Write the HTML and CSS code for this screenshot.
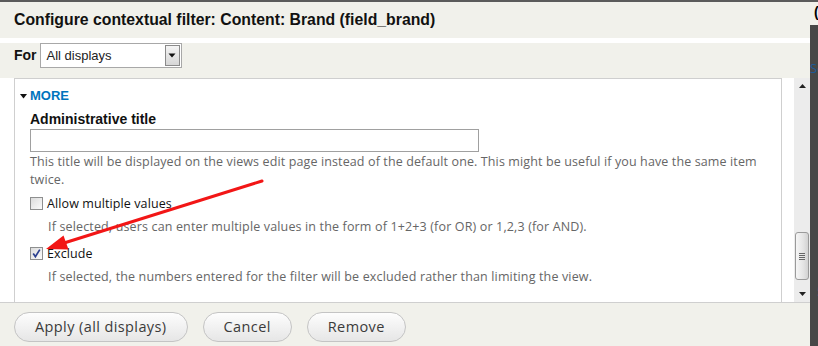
FILE: index.html
```html
<!DOCTYPE html>
<html>
<head>
<meta charset="utf-8">
<title>Configure contextual filter</title>
<link rel="stylesheet" href="styles.css">
</head>
<body>
<div class="screen">
  <div class="dialog">
    <div class="title">Configure contextual filter: Content: Brand (field_brand)</div>
    <div class="for-row">
      <span class="for-label">For</span>
      <div class="select">
        <span class="select-text">All displays</span>
        <span class="select-btn"><svg width="8" height="5" viewBox="0 0 8 5"><path d="M0.5 0.5h7L4 4.5z" fill="#111"/></svg></span>
      </div>
    </div>
    <div class="body">
      <div class="scroll">
        <div class="fieldset">
          <div class="legend"><svg class="tri" width="7" height="5" viewBox="0 0 7 5"><path d="M0 0h7L3.5 4.5z" fill="#111"/></svg>MORE</div>
          <div class="field">
            <div class="field-label">Administrative title</div>
            <div class="text-input"></div>
            <div class="desc">This title will be displayed on the views edit page instead of the default one. This might be useful if you have the same item twice.</div>
          </div>
          <div class="check-item first">
            <div class="check-row"><span class="cb"></span><span class="cb-label">Allow multiple values</span></div>
            <div class="desc indent">If selected, users can enter multiple values in the form of 1+2+3 (for OR) or 1,2,3 (for AND).</div>
          </div>
          <div class="check-item">
            <div class="check-row"><span class="cb checked"><svg width="11" height="11" viewBox="0 0 11 11"><path d="M2.2 5.4 L4.4 8.6 L8.8 1.6" fill="none" stroke="#2a3f8f" stroke-width="1.7"/></svg></span><span class="cb-label">Exclude</span></div>
            <div class="desc indent">If selected, the numbers entered for the filter will be excluded rather than limiting the view.</div>
          </div>
        </div>
      </div>
      <div class="scrollbar">
        <div class="sb-arrow"><svg width="7" height="4" viewBox="0 0 7 4"><path d="M0 4h7L3.5 0z" fill="#222"/></svg></div>
        <div class="sb-track">
          <div class="sb-thumb">
            <span class="grip"></span><span class="grip"></span><span class="grip"></span><span class="grip"></span>
          </div>
        </div>
        <div class="sb-arrow"><svg width="7" height="4" viewBox="0 0 7 4"><path d="M0 0h7L3.5 4z" fill="#222"/></svg></div>
      </div>
    </div>
    <div class="footer">
      <span class="button">Apply (all displays)</span>
      <span class="button">Cancel</span>
      <span class="button">Remove</span>
    </div>
  </div>
  <div class="side">
    <div class="side-top">(</div>
    <div class="side-dark">
      <span class="side-link one">Se</span>
      <span class="side-link two">5</span>
    </div>
  </div>
  <svg class="annotation" width="818" height="346" viewBox="0 0 818 346">
    <line x1="262" y1="181" x2="64" y2="243" stroke="#f21616" stroke-width="3" stroke-linecap="round"/>
    <path d="M46 249 L68.5 249.5 L63.5 235.5 Z" fill="#f21616"/>
  </svg>
</div>
</body>
</html>
```

FILE: styles.css
```css
html, body {
  margin: 0;
  padding: 0;
}
body {
  width: 818px;
  height: 346px;
  overflow: hidden;
  font-family: "Open Sans", "Liberation Sans", sans-serif;
  color: #222;
}
.screen {
  position: relative;
  display: flex;
  width: 818px;
  height: 346px;
  box-sizing: border-box;
  border-top: 2px solid #5b5b5b;
}
.dialog {
  width: 810px;
  display: flex;
  flex-direction: column;
  background: #f1f1eb;
}
.title {
  height: 36px;
  line-height: 36px;
  padding-left: 14px;
  font-family: "Liberation Sans", Arial, sans-serif;
  font-weight: bold;
  font-size: 15.8px;
  color: #111;
  border-bottom: 5px solid #fff;
}
.for-row {
  height: 35px;
  display: flex;
  align-items: flex-start;
  padding-left: 14px;
}
.for-label {
  font-family: "Liberation Sans", Arial, sans-serif;
  font-weight: bold;
  font-size: 14px;
  line-height: 25px;
  color: #111;
}
.select {
  margin-left: 3px;
  width: 142px;
  height: 25px;
  box-sizing: border-box;
  border: 1px solid #a8a8a8;
  background: #fff;
  display: flex;
  align-items: stretch;
}
.select-text {
  flex: 1;
  padding-left: 6px;
  font-family: "Liberation Sans", Arial, sans-serif;
  font-size: 13px;
  line-height: 23px;
  color: #222;
}
.select-btn {
  width: 15px;
  margin: 1px 1px 1px 0;
  box-sizing: border-box;
  border: 1px solid #8a8a8a;
  background: linear-gradient(#f4f4f4, #d6d6d6);
  display: flex;
  align-items: center;
  justify-content: center;
}
.body {
  height: 224px;
  display: flex;
  background: #fff;
}
.scroll {
  width: 794px;
  box-sizing: border-box;
  padding: 0 12px 0 14px;
  overflow: hidden;
}
.fieldset {
  height: 240px;
  border: 1px solid #cfcfcf;
  border-bottom: none;
  padding: 8px 0 0 0;
}
.legend {
  height: 18px;
  line-height: 18px;
  display: flex;
  align-items: center;
  padding-left: 5px;
  font-family: "Liberation Sans", Arial, sans-serif;
  font-weight: bold;
  font-size: 13px;
  color: #0074bd;
}
.tri {
  margin-right: 3px;
  margin-top: 1px;
}
.field {
  padding: 0 8px 0 15px;
}
.field-label {
  margin-top: 5px;
  height: 18px;
  line-height: 18px;
  font-family: "Liberation Sans", Arial, sans-serif;
  font-weight: bold;
  font-size: 14px;
  color: #111;
}
.text-input {
  margin-top: 1px;
  width: 449px;
  height: 23px;
  box-sizing: border-box;
  border: 1px solid #a0a0a0;
  background: #fff;
}
.desc {
  margin-top: 1px;
  font-size: 12.5px;
  letter-spacing: 0.12px;
  line-height: 18px;
  color: #666;
}
.check-item {
  margin-top: 10px;
  padding: 0 8px 0 15px;
}
.check-item.first {
  margin-top: 7px;
}
.check-row {
  height: 15px;
  display: flex;
  align-items: center;
}
.cb {
  width: 13px;
  height: 13px;
  box-sizing: border-box;
  border: 1px solid #8e8f8f;
  background: linear-gradient(135deg, #dcdcdc, #fbfbfb);
  display: flex;
  align-items: center;
  justify-content: center;
}
.cb-label {
  margin-left: 4px;
  font-size: 12.5px;
  letter-spacing: 0.1px;
  line-height: 15px;
  color: #111;
}
.desc.indent {
  margin-top: 7px;
  padding-left: 18px;
  letter-spacing: 0.15px;
}
.scrollbar {
  width: 16px;
  display: flex;
  flex-direction: column;
  background: #ececec;
}
.sb-arrow {
  height: 16px;
  display: flex;
  align-items: center;
  justify-content: center;
}
.sb-track {
  flex: 1;
  display: flex;
  flex-direction: column;
  justify-content: flex-end;
}
.sb-thumb {
  height: 48px;
  margin: 0 1px 6px 1px;
  box-sizing: border-box;
  border: 1px solid #9a9a9a;
  border-radius: 3px;
  background: linear-gradient(90deg, #f6f6f6, #e4e4e4 60%, #d2d2d2);
  display: flex;
  flex-direction: column;
  align-items: center;
  justify-content: center;
  gap: 1px;
}
.grip {
  width: 6px;
  height: 1px;
  background: #666;
}
.footer {
  height: 44px;
  box-sizing: border-box;
  border-top: 1px solid #cfcfcf;
  padding: 9px 0 0 14px;
  display: flex;
  gap: 15px;
  align-items: flex-start;
}
.button {
  height: 30px;
  box-sizing: border-box;
  padding: 0 20px;
  border: 1px solid #c4c4c4;
  border-radius: 15px;
  background: linear-gradient(#fdfdfd, #e6e6e6);
  font-size: 14.5px;
  letter-spacing: 0.4px;
  line-height: 28px;
  color: #3b3b3b;
}
.side {
  width: 8px;
  display: flex;
  flex-direction: column;
  overflow: hidden;
}
.side-top {
  height: 23px;
  background: #f1f1eb;
  font-family: "Liberation Sans", Arial, sans-serif;
  font-weight: bold;
  font-size: 14px;
  line-height: 20px;
  padding-left: 4px;
  color: #000;
}
.side-dark {
  flex: 1;
  background: #474747;
  position: relative;
}
.side-link {
  position: absolute;
  font-size: 13px;
  color: #1d5a9a;
  line-height: 14px;
}
.side-link.one {
  top: 36px;
  left: 0px;
}
.side-link.two {
  top: 259px;
  left: 7px;
}
.annotation {
  position: absolute;
  left: 0;
  top: -2px;
  pointer-events: none;
}
```
